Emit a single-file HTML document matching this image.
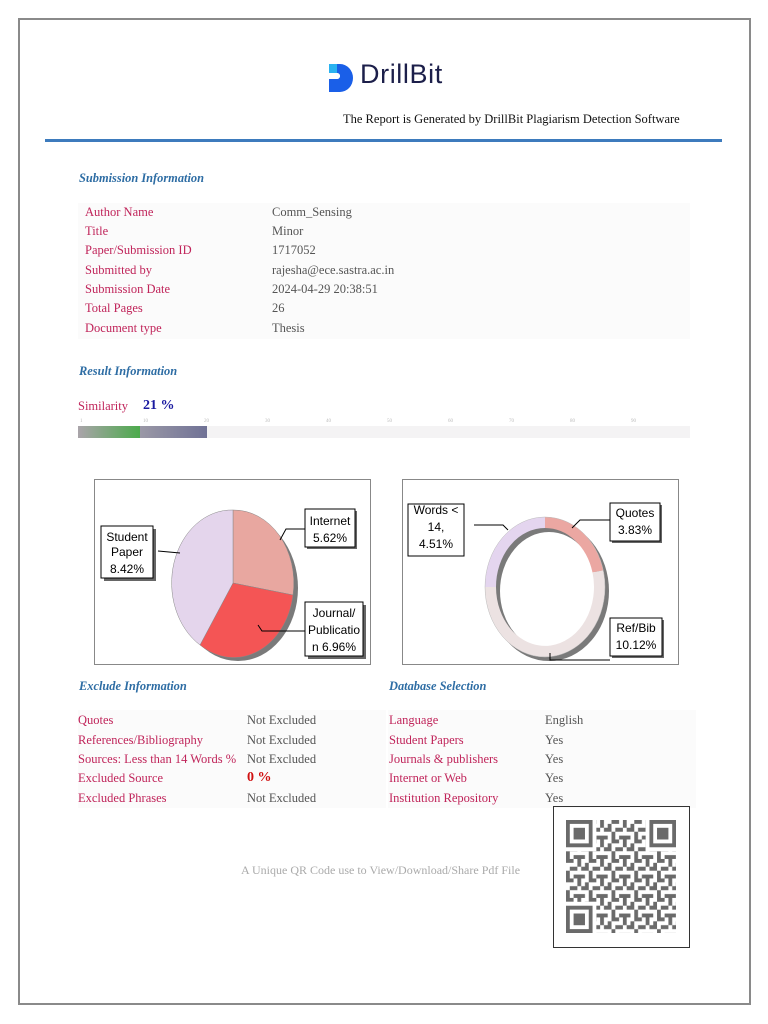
<!DOCTYPE html>
<html><head><meta charset="utf-8"><style>
body{margin:0;width:768px;height:1024px;background:#fff;position:relative;font-family:"Liberation Serif",serif;overflow:hidden}
.a{position:absolute;white-space:nowrap}
.h{font-style:italic;font-weight:bold;color:#2e6da4;font-size:12.4px}
.l{color:#c0245a;font-size:12.5px}
.v{color:#555;font-size:12.5px}
.tk{position:absolute;top:419px;font-size:5px;color:#bbb}
</style></head><body>
<div class="a" style="left:18px;top:18px;width:729px;height:983px;border:2px solid #8a8a8a"></div>
<svg class="a" style="left:327px;top:62px" width="28" height="32" viewBox="0 0 28 32"><path d="M2 2h11a13 14 0 0 1 0 28H2V17h8a3 3 0 0 0 0-6H8V2z" fill="#1a5fe8"/><path d="M2 2h8v9H2z" fill="#2bb3f0"/><path d="M8 11h2a3 3 0 0 1 0 6H8z" fill="#fff"/></svg>
<div class="a" style="left:360px;top:59px;font-family:'Liberation Sans',sans-serif;font-size:27px;color:#1c1f4a;letter-spacing:0.6px">DrillBit</div>
<div class="a" style="left:343px;top:112px;font-size:12.5px;color:#111">The Report is Generated by DrillBit Plagiarism Detection Software</div>
<div class="a" style="left:45px;top:139px;width:677px;height:3px;background:#3d7bbd"></div>
<div class="a h" style="left:79px;top:171px">Submission Information</div>
<div class="a" style="left:78px;top:203px;width:612px;height:136px;background:#fbfbfb"></div>
<div class="a l" style="left:85px;top:205px">Author Name</div><div class="a v" style="left:272px;top:205px">Comm_Sensing</div>
<div class="a l" style="left:85px;top:224px">Title</div><div class="a v" style="left:272px;top:224px">Minor</div>
<div class="a l" style="left:85px;top:243px">Paper/Submission ID</div><div class="a v" style="left:272px;top:243px">1717052</div>
<div class="a l" style="left:85px;top:263px">Submitted by</div><div class="a v" style="left:272px;top:263px">rajesha@ece.sastra.ac.in</div>
<div class="a l" style="left:85px;top:282px">Submission Date</div><div class="a v" style="left:272px;top:282px">2024-04-29 20:38:51</div>
<div class="a l" style="left:85px;top:301px">Total Pages</div><div class="a v" style="left:272px;top:301px">26</div>
<div class="a l" style="left:85px;top:321px">Document type</div><div class="a v" style="left:272px;top:321px">Thesis</div>
<div class="a h" style="left:79px;top:364px">Result Information</div>
<div class="a l" style="left:78px;top:399px;color:#c0245a">Similarity</div>
<div class="a" style="left:143px;top:398px;font-size:14px;font-weight:bold;color:#1a1aa0">21 %</div>
<div class="tk" style="left:80px">1</div><div class="tk" style="left:143px">10</div><div class="tk" style="left:204px">20</div><div class="tk" style="left:265px">30</div><div class="tk" style="left:326px">40</div><div class="tk" style="left:387px">50</div><div class="tk" style="left:448px">60</div><div class="tk" style="left:509px">70</div><div class="tk" style="left:570px">80</div><div class="tk" style="left:631px">90</div>
<div class="a" style="left:78px;top:426px;width:612px;height:12px;background:#f4f3f4"></div>
<div class="a" style="left:78px;top:426px;width:62px;height:12px;background:linear-gradient(90deg,#aaa4aa,#4caa4c)"></div>
<div class="a" style="left:140px;top:426px;width:67px;height:12px;background:linear-gradient(90deg,#9a98a6,#707296)"></div>
<svg class="a" style="left:0;top:0" width="768" height="700" font-family="Liberation Sans,sans-serif" font-size="12">
<rect x="94.5" y="479.5" width="276" height="185" fill="#fff" stroke="#888"/>
<ellipse cx="238" cy="588" rx="60" ry="73" fill="#7a7a7a"/>
<path d="M233,583 L233,510 A60,73 0 0 1 293,595 Z" fill="#e8a7a0" stroke="#888" stroke-width=".5"/>
<path d="M233,583 L293,595 A60,73 0 0 1 200,645 Z" fill="#f45555" stroke="#888" stroke-width=".5"/>
<path d="M233,583 L200,645 A60,73 0 0 1 233,510 Z" fill="#e4d5ec" stroke="#888" stroke-width=".5"/>
<polyline points="280,540 286,529 307,529" fill="none" stroke="#000"/>
<polyline points="180,553 158,551" fill="none" stroke="#000"/>
<polyline points="258,625 262,631 305,631" fill="none" stroke="#000"/>
<rect x="307" y="511" width="50" height="38" fill="#666"/><rect x="305" y="509" width="50" height="38" fill="#fff" stroke="#000"/>
<text x="330" y="525" text-anchor="middle">Internet</text><text x="330" y="542" text-anchor="middle">5.62%</text>
<rect x="104" y="529" width="52" height="52" fill="#666"/><rect x="101" y="526" width="52" height="52" fill="#fff" stroke="#000"/>
<text x="127" y="541" text-anchor="middle">Student</text><text x="127" y="556" text-anchor="middle">Paper</text><text x="127" y="573" text-anchor="middle">8.42%</text>
<rect x="308" y="605" width="58" height="54" fill="#666"/><rect x="305" y="602" width="58" height="54" fill="#fff" stroke="#000"/>
<text x="334" y="617" text-anchor="middle">Journal/</text><text x="334" y="634" text-anchor="middle">Publicatio</text><text x="334" y="651" text-anchor="middle">n 6.96%</text>
<rect x="402.5" y="479.5" width="276" height="185" fill="#fff" stroke="#888"/>
<ellipse cx="549" cy="591" rx="54.5" ry="64.5" fill="none" stroke="#7a7a7a" stroke-width="11"/>
<path d="M545,522.5 A54.5,64.5 0 0 1 597.9,571.4" fill="none" stroke="#eba7a2" stroke-width="11"/>
<path d="M597.9,571.4 A54.5,64.5 0 1 1 490.5,587" fill="none" stroke="#ece2e2" stroke-width="11"/>
<path d="M490.5,587 A54.5,64.5 0 0 1 545,522.5" fill="none" stroke="#e4d5ef" stroke-width="11"/>
<ellipse cx="545" cy="587" rx="60" ry="70" fill="none" stroke="#bbb" stroke-width=".5"/>
<polyline points="572,528 580,520 612,520" fill="none" stroke="#000"/>
<polyline points="508,530 503,525 474,525" fill="none" stroke="#000"/>
<polyline points="550,653 550,660 610,660" fill="none" stroke="#000"/>
<rect x="612" y="505" width="50" height="38" fill="#666"/><rect x="610" y="503" width="50" height="38" fill="#fff" stroke="#000"/>
<text x="635" y="517" text-anchor="middle">Quotes</text><text x="635" y="534" text-anchor="middle">3.83%</text>
<rect x="408" y="504" width="56" height="52" fill="#fff" stroke="#000"/>
<text x="436" y="514" text-anchor="middle">Words &lt;</text><text x="436" y="531" text-anchor="middle">14,</text><text x="436" y="548" text-anchor="middle">4.51%</text>
<rect x="612" y="620" width="52" height="38" fill="#666"/><rect x="610" y="618" width="52" height="38" fill="#fff" stroke="#000"/>
<text x="636" y="632" text-anchor="middle">Ref/Bib</text><text x="636" y="649" text-anchor="middle">10.12%</text>
</svg>
<div class="a h" style="left:79px;top:679px">Exclude Information</div>
<div class="a h" style="left:389px;top:679px">Database Selection</div>
<div class="a" style="left:78px;top:710px;width:308px;height:98px;background:#fbfbfb"></div>
<div class="a" style="left:388px;top:710px;width:308px;height:98px;background:#fbfbfb"></div>
<div class="a l" style="left:78px;top:713px">Quotes</div><div class="a v" style="left:247px;top:713px">Not Excluded</div>
<div class="a l" style="left:78px;top:733px">References/Bibliography</div><div class="a v" style="left:247px;top:733px">Not Excluded</div>
<div class="a l" style="left:78px;top:752px">Sources: Less than 14 Words %</div><div class="a v" style="left:247px;top:752px">Not Excluded</div>
<div class="a l" style="left:78px;top:771px">Excluded Source</div><div class="a" style="left:247px;top:770px;font-size:14px;font-weight:bold;color:#d01010">0 %</div>
<div class="a l" style="left:78px;top:791px">Excluded Phrases</div><div class="a v" style="left:247px;top:791px">Not Excluded</div>
<div class="a l" style="left:389px;top:713px">Language</div><div class="a v" style="left:545px;top:713px">English</div>
<div class="a l" style="left:389px;top:733px">Student Papers</div><div class="a v" style="left:545px;top:733px">Yes</div>
<div class="a l" style="left:389px;top:752px">Journals &amp; publishers</div><div class="a v" style="left:545px;top:752px">Yes</div>
<div class="a l" style="left:389px;top:771px">Internet or Web</div><div class="a v" style="left:545px;top:771px">Yes</div>
<div class="a l" style="left:389px;top:791px">Institution Repository</div><div class="a v" style="left:545px;top:791px">Yes</div>
<div class="a" style="left:241px;top:863px;font-size:12px;color:#aaa">A Unique QR Code use to View/Download/Share Pdf File</div>
<div class="a" style="left:553px;top:806px;width:135px;height:140px;border:1px solid #333"></div>
<svg class="a" style="left:566px;top:820px" width="110" height="113" viewBox="0 0 29 29" preserveAspectRatio="none">
<defs><pattern id="p" width="6" height="5" patternUnits="userSpaceOnUse"><path d="M0 0h2v1H0zM3 0h1v2H3zM5 1h1v2H5zM1 2h2v1H1zM0 3h1v2H0zM2 4h3v1H2zM4 2h1v1H4z" fill="#6a6a6a"/></pattern></defs>
<rect width="29" height="29" fill="url(#p)"/>
<g fill="#fff"><rect width="8" height="8"/><rect x="21" width="8" height="8"/><rect y="21" width="8" height="8"/></g>
<g fill="none" stroke="#6a6a6a"><rect x=".5" y=".5" width="6" height="6"/><rect x="22.5" y=".5" width="6" height="6"/><rect x=".5" y="22.5" width="6" height="6"/></g>
<g fill="#6a6a6a"><rect x="2" y="2" width="3" height="3"/><rect x="24" y="2" width="3" height="3"/><rect x="2" y="24" width="3" height="3"/></g>
</svg>
</body></html>
